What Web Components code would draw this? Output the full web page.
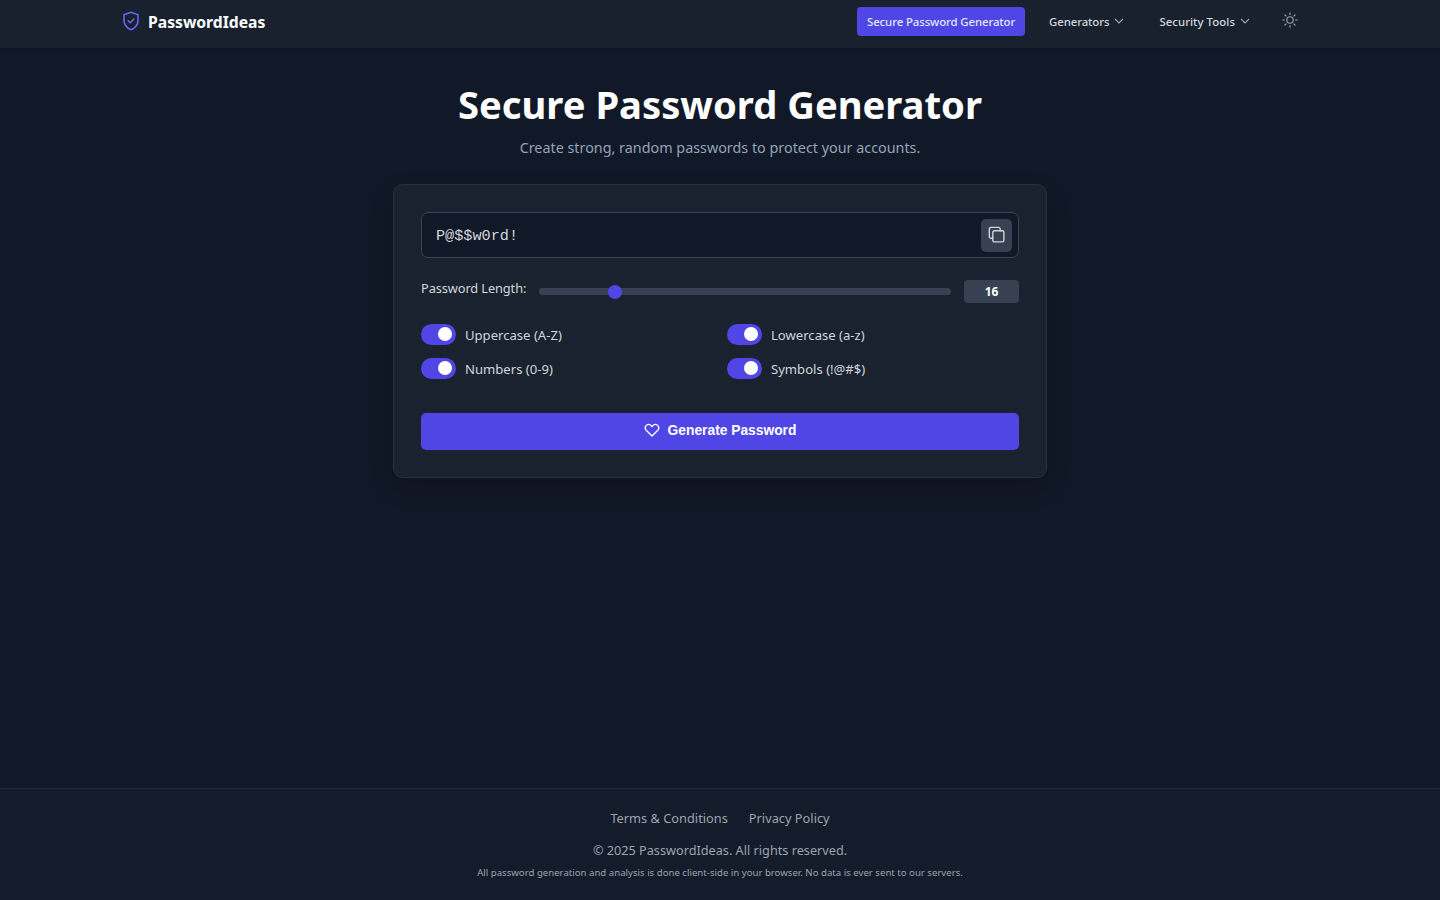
<!DOCTYPE html>
<html lang="en">
<head>
<meta charset="utf-8">
<title>PasswordIdeas</title>
<style>
  html, body { margin: 0; height: 100%; }
  body {
    background: #111827;
    color: #e5e7eb;
    font-family: "Noto Sans", "Open Sans", sans-serif;
  }
  #app { display: flex; flex-direction: column; height: 900px; }
</style>
</head>
<body>
<div id="app">
  <site-header></site-header>
  <generator-page></generator-page>
  <site-footer></site-footer>
</div>

<script>
class SiteHeader extends HTMLElement {
  constructor() {
    super();
    this.attachShadow({ mode: "open" });
    this.shadowRoot.innerHTML = `
      <style>
        :host { display: block; box-sizing: border-box; height: 48px; padding-bottom: 5px; background: #19212f; box-shadow: 0 1px 3px rgba(0,0,0,.25); }
        nav { display: flex; align-items: center; height: 100%; padding: 0 142px 0 122px; }
        .logo { display: flex; align-items: center; gap: 8px; font-size: 15.7px; font-weight: 700; color: #fff; flex: 1; }
        .logo svg { width: 18px; height: 20px; margin-top: -1px; }
        .links { display: flex; align-items: center; font-size: 11.4px; letter-spacing: -0.1px; font-weight: 500; color: #d1d5db; }
        .active { background: #4f46e5; color: #e0e7ff; height: 29px; width: 168px; border-radius: 4px; display: flex; align-items: center; justify-content: center; margin-right: 24px; }
        .drop { display: flex; align-items: center; gap: 5px; }
        .drop svg { width: 10px; height: 10px; margin-top: -1px; }
        .tools { letter-spacing: 0.05px; }
        .sun { width: 16px; height: 16px; margin-left: 32px; margin-top: -3px; }
      </style>
      <nav>
        <div class="logo">
          <svg viewBox="0 0 18 20" fill="none" stroke="#6366f1" stroke-width="1.6" stroke-linecap="round" stroke-linejoin="round">
            <path d="M9 1.2 L16 3.7 V9.5 C16 14 13 17 9 18.8 C5 17 2 14 2 9.5 V3.7 Z"/>
            <path d="M6.2 9.8 L8.2 11.8 L12 8"/>
          </svg>
          <span>PasswordIdeas</span>
        </div>
        <div class="links">
          <span class="active">Secure Password Generator</span>
          <span class="drop" style="margin-right:35px">Generators
            <svg viewBox="0 0 10 10" fill="none" stroke="#9ca3af" stroke-width="1.1"><path d="M1 3 L5 7 L9 3"/></svg></span>
          <span class="drop tools">Security Tools
            <svg viewBox="0 0 10 10" fill="none" stroke="#9ca3af" stroke-width="1.1"><path d="M1 3 L5 7 L9 3"/></svg></span>
          <svg class="sun" viewBox="0 0 16 16" fill="none" stroke="#9ca3af" stroke-width="1.1" stroke-linecap="round">
            <circle cx="8" cy="8" r="3.2"/>
            <path d="M8 .8v1.6M8 13.6v1.6M.8 8h1.6M13.6 8h1.6M2.9 2.9l1.1 1.1M12 12l1.1 1.1M2.9 13.1L4 12M12 4l1.1-1.1"/>
          </svg>
        </div>
      </nav>`;
  }
}

class OptionToggle extends HTMLElement {
  constructor() {
    super();
    this.attachShadow({ mode: "open" });
    this.shadowRoot.innerHTML = `
      <style>
        :host { display: flex; align-items: center; gap: 9.5px; font-size: 13.1px; color: #d1d5db; height: 20px; }
        .track { width: 34.5px; height: 21px; border-radius: 11px; background: #4f46e5; display: flex; align-items: center; justify-content: flex-end; padding-right: 4px; box-sizing: border-box; }
        .knob { width: 14px; height: 14px; border-radius: 50%; background: #fff; }
        span { margin-top: 2px; }
      </style>
      <div class="track"><div class="knob"></div></div>
      <span><slot></slot></span>`;
  }
}

class GeneratorCard extends HTMLElement {
  constructor() {
    super();
    this.attachShadow({ mode: "open" });
    this.shadowRoot.innerHTML = `
      <style>
        :host { display: block; box-sizing: border-box; width: 654px; height: 294px; padding: 28px; background: #1a2230; border: 1px solid #273040; border-radius: 10px; box-shadow: 0 10px 25px rgba(0,0,0,.2); }
        .output { display: flex; align-items: center; justify-content: space-between; box-sizing: border-box; height: 46px; padding: 0 6px 0 14px; background: #111827; border: 1px solid #3b4455; border-radius: 7px; margin: -1px -1px 0; }
        .pw { font-family: "Liberation Mono", monospace; font-size: 15.2px; color: #d1d5db; margin-top: 1px; }
        .copy { width: 31px; height: 33px; border-radius: 5px; background: #374151; display: flex; align-items: center; justify-content: center; }
        .copy svg { width: 19px; height: 19px; margin-top: -2px; margin-left: -1px; }
        .length { display: flex; align-items: center; margin: 22px -1px 0; height: 23px; font-size: 12.8px; letter-spacing: -0.1px; color: #d1d5db; }
        .length label { margin-right: 13px; margin-top: -7px; }
        input { flex: 1; min-width: 0; margin: 0 13px 0 0; height: 14px; appearance: none; -webkit-appearance: none; background: transparent; }
        input::-webkit-slider-runnable-track { height: 7px; border-radius: 4px; background: #374151; }
        input::-webkit-slider-thumb { -webkit-appearance: none; width: 14px; height: 14px; margin-top: -3.5px; border-radius: 50%; background: #4f46e5; }
        .value { width: 55px; height: 23px; border-radius: 4px; background: #374151; color: #fff; font-size: 12px; font-weight: 700; letter-spacing: 0; display: flex; align-items: center; justify-content: center; }
        .options { display: grid; grid-template-columns: 292px 292px; column-gap: 14px; row-gap: 14px; margin: 21px -1px 0; }
        button { display: flex; align-items: center; justify-content: center; gap: 8px; width: 598px; height: 37px; margin: 35px -1px 0; padding: 0 0 2px; border: 0; border-radius: 5px; background: #4f46e5; color: #fff; font-family: "Liberation Sans", Arial, sans-serif; font-size: 13.8px; font-weight: 700; }
        button svg { width: 16px; height: 16px; margin-top: -2px; }
      </style>
      <div class="output">
        <span class="pw">P@$$w0rd!</span>
        <div class="copy">
          <svg viewBox="0 0 18 18" fill="none" stroke="#d1d5db" stroke-width="1.3" stroke-linejoin="round" stroke-linecap="round">
            <rect x="5.5" y="5.5" width="10.5" height="10.5" rx="1.6"/>
            <path d="M5.5 12.5 H4 A1.7 1.7 0 0 1 2.2 10.8 V4 A1.7 1.7 0 0 1 4 2.2 H10.8 A1.7 1.7 0 0 1 12.5 4 V5.5"/>
          </svg>
        </div>
      </div>
      <div class="length">
        <label>Password Length:</label>
        <input type="range" min="6" max="64" value="16">
        <span class="value">16</span>
      </div>
      <div class="options">
        <option-toggle>Uppercase (A-Z)</option-toggle>
        <option-toggle>Lowercase (a-z)</option-toggle>
        <option-toggle>Numbers (0-9)</option-toggle>
        <option-toggle>Symbols (!@#$)</option-toggle>
      </div>
      <button>
        <svg viewBox="0 0 16 16" fill="none" stroke="#fff" stroke-width="1.4" stroke-linejoin="round">
          <path d="M8 14 L2.2 8.3 C.6 6.6 1 4 2.8 3 C4.6 2 6.8 2.6 8 4.6 C9.2 2.6 11.4 2 13.2 3 C15 4 15.4 6.6 13.8 8.3 Z"/>
        </svg>
        Generate Password
      </button>`;
  }
}

class GeneratorPage extends HTMLElement {
  constructor() {
    super();
    this.attachShadow({ mode: "open" });
    this.shadowRoot.innerHTML = `
      <style>
        :host { display: flex; flex-direction: column; align-items: center; flex: 1; }
        h1 { margin: 29px 0 0; font-size: 38.2px; line-height: 54px; font-weight: 700; color: #fff; }
        p { margin: 5px 0 24px; font-size: 14.35px; line-height: 24px; color: #94a3b8; }
      </style>
      <h1>Secure Password Generator</h1>
      <p>Create strong, random passwords to protect your accounts.</p>
      <generator-card></generator-card>`;
  }
}

class SiteFooter extends HTMLElement {
  constructor() {
    super();
    this.attachShadow({ mode: "open" });
    this.shadowRoot.innerHTML = `
      <style>
        :host { display: flex; flex-direction: column; align-items: center; box-sizing: border-box; height: 112px; background: #141b2a; border-top: 1px solid #242d3b; color: #9ca3af; }
        .links { display: flex; gap: 21px; margin-top: 19px; font-size: 12.8px; line-height: 20px; }
        .copy { margin-top: 12px; font-size: 12.7px; line-height: 20px; }
        .note { margin-top: 5px; font-size: 9.63px; line-height: 16px; }
      </style>
      <div class="links"><span>Terms &amp; Conditions</span><span>Privacy Policy</span></div>
      <div class="copy">© 2025 PasswordIdeas. All rights reserved.</div>
      <div class="note">All password generation and analysis is done client-side in your browser. No data is ever sent to our servers.</div>`;
  }
}

customElements.define("site-header", SiteHeader);
customElements.define("option-toggle", OptionToggle);
customElements.define("generator-card", GeneratorCard);
customElements.define("generator-page", GeneratorPage);
customElements.define("site-footer", SiteFooter);
</script>
</body>
</html>
